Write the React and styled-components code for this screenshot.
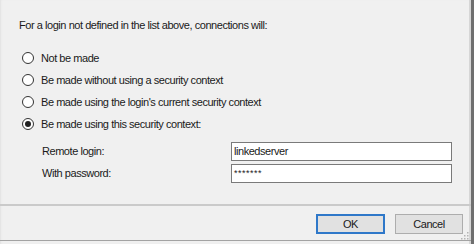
import styled, { createGlobalStyle } from 'styled-components'

const GlobalStyle = createGlobalStyle`
  html, body {
    margin: 0;
    padding: 0;
    background: #f0f0f0;
  }
  * {
    box-sizing: border-box;
  }
`

const options = [
  { id: 'none', label: 'Not be made' },
  { id: 'nocontext', label: 'Be made without using a security context' },
  { id: 'current', label: "Be made using the login's current security context" },
  { id: 'this', label: 'Be made using this security context:' },
]

const App = () => {
  const selected = 'this'

  return (
    <>
      <GlobalStyle />
      <Dialog>
        <Body>
          <Heading>For a login not defined in the list above, connections will:</Heading>
          <RadioList>
            {options.map(option => (
              <RadioRow key={option.id}>
                <Radio checked={option.id === selected} />
                <Label>{option.label}</Label>
              </RadioRow>
            ))}
          </RadioList>
          <Credentials>
            <Label>Remote login:</Label>
            <TextBox>linkedserver</TextBox>
            <Label>With password:</Label>
            <TextBox $masked>*******</TextBox>
          </Credentials>
        </Body>
        <Footer>
          <Button $primary>OK</Button>
          <Button>Cancel</Button>
        </Footer>
        <Grip width="8" height="8" viewBox="0 0 8 8">
          <rect x="6" y="0" width="1.5" height="1.5" fill="#b4b4b4" />
          <rect x="3" y="3" width="1.5" height="1.5" fill="#b4b4b4" />
          <rect x="6" y="3" width="1.5" height="1.5" fill="#b4b4b4" />
          <rect x="0" y="6" width="1.5" height="1.5" fill="#b4b4b4" />
          <rect x="3" y="6" width="1.5" height="1.5" fill="#b4b4b4" />
          <rect x="6" y="6" width="1.5" height="1.5" fill="#b4b4b4" />
        </Grip>
      </Dialog>
    </>
  )
}

export default App

const Dialog = styled.div`
  position: relative;
  width: 474px;
  height: 244px;
  display: flex;
  flex-direction: column;
  background: #f0f0f0;
  border-right: 3px solid #6f6f6f;
  box-shadow: inset -2px 0 0 #d6d6d6, inset 2px 0 2px -1px #e2e2e2;
  font-family: 'Liberation Sans', Arial, sans-serif;
  font-size: 11px;
  letter-spacing: -0.45px;
  color: #1a1a1a;
`

const Body = styled.div`
  height: 204px;
  padding: 17px 0 0 19px;
  display: flex;
  flex-direction: column;
`

const Heading = styled.div`
  line-height: 16px;
`

const RadioList = styled.div`
  margin-top: 14px;
  display: flex;
  flex-direction: column;
`

const RadioRow = styled.div`
  display: flex;
  align-items: center;
  height: 22px;
  gap: 7px;
  padding-left: 3px;
`

const Radio = styled.span`
  position: relative;
  width: 12px;
  height: 12px;
  border: 1px solid #333;
  border-radius: 50%;
  background: #fff;
  flex: none;

  &::after {
    content: '';
    display: ${p => (p.checked ? 'block' : 'none')};
    position: absolute;
    left: 2px;
    top: 2px;
    width: 6px;
    height: 6px;
    border-radius: 50%;
    background: #222;
  }
`

const Label = styled.span`
  line-height: 16px;
  white-space: nowrap;
`

const Credentials = styled.div`
  margin-top: 5px;
  padding-left: 23px;
  display: grid;
  grid-template-columns: 189px 221px;
  grid-auto-rows: 22px;
  align-items: center;
`

const TextBox = styled.div`
  height: 19px;
  border: 1px solid #7a7a7a;
  background: #fff;
  padding: 0 2px;
  line-height: 17px;
  letter-spacing: ${p => (p.$masked ? '0.5px' : '-0.45px')};
  font-size: ${p => (p.$masked ? '9px' : '11px')};
`

const Footer = styled.div`
  height: 37px;
  border-top: 2px solid #cacaca;
  border-bottom: 1px solid #a3a3a3;
  display: flex;
  justify-content: flex-end;
  align-items: flex-start;
  gap: 10px;
  padding: 8px 8px 0 0;
`

const Button = styled.div`
  height: 20px;
  width: ${p => (p.$primary ? '69px' : '68px')};
  display: flex;
  align-items: center;
  justify-content: center;
  background: #e1e1e1;
  border: 1px solid ${p => (p.$primary ? '#2f78c9' : '#adadad')};
  box-shadow: ${p => (p.$primary ? 'inset 0 0 0 1px #2f78c9' : 'none')};
`

const Grip = styled.svg`
  position: absolute;
  right: 2px;
  bottom: 4px;
`
